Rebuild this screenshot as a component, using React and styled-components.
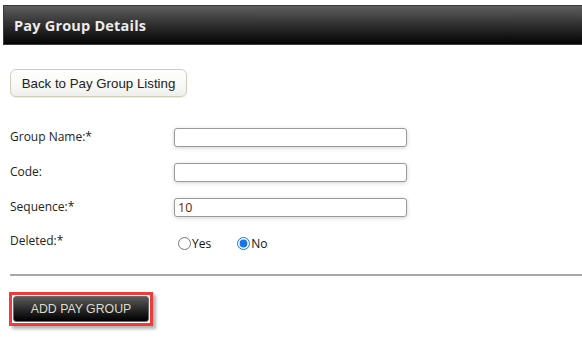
import React from 'react';
import styled, { createGlobalStyle } from 'styled-components';

const GlobalStyle = createGlobalStyle`
  html, body {
    margin: 0;
    padding: 0;
    background: #ffffff;
  }
  body {
    font-family: "Open Sans", "Noto Sans", sans-serif;
    overflow: hidden;
  }
`;

const App = () => {
  return (
    <Page>
      <GlobalStyle />
      <Header>
        <HeaderTitle>Pay Group Details</HeaderTitle>
      </Header>
      <Content>
        <BackButton type="button">Back to Pay Group Listing</BackButton>
        <Form>
          <Label>Group Name:*</Label>
          <TextInput type="text" defaultValue="" />
          <Label>Code:</Label>
          <TextInput type="text" defaultValue="" />
          <Label>Sequence:*</Label>
          <TextInput type="text" defaultValue="10" />
          <Label $raised>Deleted:*</Label>
          <RadioGroup>
            <RadioOption>
              <Radio type="radio" name="deleted" />
              Yes
            </RadioOption>
            <RadioOption>
              <Radio type="radio" name="deleted" defaultChecked />
              No
            </RadioOption>
          </RadioGroup>
        </Form>
        <Divider />
        <Highlight>
          <DarkButton type="button">ADD PAY GROUP</DarkButton>
        </Highlight>
      </Content>
    </Page>
  );
};

const Page = styled.div`
  width: 582px;
  height: 343px;
  padding-top: 5px;
  box-sizing: border-box;
`;

const Header = styled.div`
  margin-left: 3px;
  height: 38px;
  border: 1px solid #3a3a3a;
  border-right: none;
  background: linear-gradient(to bottom, #5e5e5e 0%, #2a2a2a 55%, #040404 100%);
  display: flex;
  align-items: center;
  padding-left: 10px;
`;

const HeaderTitle = styled.h1`
  margin: 0;
  color: #ececec;
  font-family: "Open Sans", "Noto Sans", sans-serif;
  font-weight: 700;
  font-size: 14.5px;
  letter-spacing: 0.2px;
`;

const Content = styled.div`
  padding: 24px 0 0 10px;
`;

const BackButton = styled.button`
  display: block;
  height: 28px;
  width: 177px;
  padding: 0;
  border: 1px solid #cfcdb8;
  border-radius: 6px;
  background: linear-gradient(to bottom, #ffffff 0%, #f8f8f6 60%, #eeeeec 100%);
  box-shadow: 0 1px 1px rgba(0, 0, 0, 0.08);
  font-family: "Liberation Sans", Arial, sans-serif;
  font-size: 13.3px;
  color: #222;
`;

const Form = styled.div`
  display: grid;
  grid-template-columns: 164px 233px;
  grid-auto-rows: 18px;
  row-gap: 17px;
  margin-top: 31px;
  align-items: center;
`;

const Label = styled.label`
  font-size: 12px;
  color: #222;
  transform: translateY(${p => (p.$raised ? '-2px' : '-1px')});
`;

const TextInput = styled.input`
  box-sizing: border-box;
  height: 19px;
  width: 233px;
  margin: 0;
  padding: 0 3px;
  border: 1px solid #9a9a9a;
  border-radius: 3px;
  box-shadow: 0 1px 4px rgba(0, 0, 0, 0.18);
  font-family: "Open Sans", "Noto Sans", sans-serif;
  font-size: 12.5px;
  color: #6b1a10;
  outline: none;
`;

const RadioGroup = styled.div`
  display: flex;
  gap: 26px;
  padding-left: 4px;
  transform: translateY(1px);
`;

const RadioOption = styled.label`
  display: flex;
  align-items: center;
  font-size: 12px;
  color: #111;
`;

const Radio = styled.input`
  width: 13px;
  height: 13px;
  margin: 0 1px 0 0;
  accent-color: #1a73e8;
`;

const Divider = styled.hr`
  margin: 23px 0 0 0;
  border: none;
  border-top: 2px solid #a8a8a8;
`;

const Highlight = styled.div`
  display: inline-block;
  margin: 16px 0 0 -1px;
  border: 3px solid #ef3b3b;
  padding: 1px;
  box-shadow: 3px 3px 3px rgba(0, 0, 0, 0.3);
  line-height: 0;
`;

const DarkButton = styled.button`
  width: 136px;
  height: 26px;
  padding: 0;
  border: 1px solid #6a6a6a;
  border-radius: 3px;
  background: linear-gradient(to bottom, #5a5a5a 0%, #262626 55%, #000000 100%);
  font-family: "Liberation Sans", Arial, sans-serif;
  font-size: 12.3px;
  color: #dcdcd0;
`;

export default App;
